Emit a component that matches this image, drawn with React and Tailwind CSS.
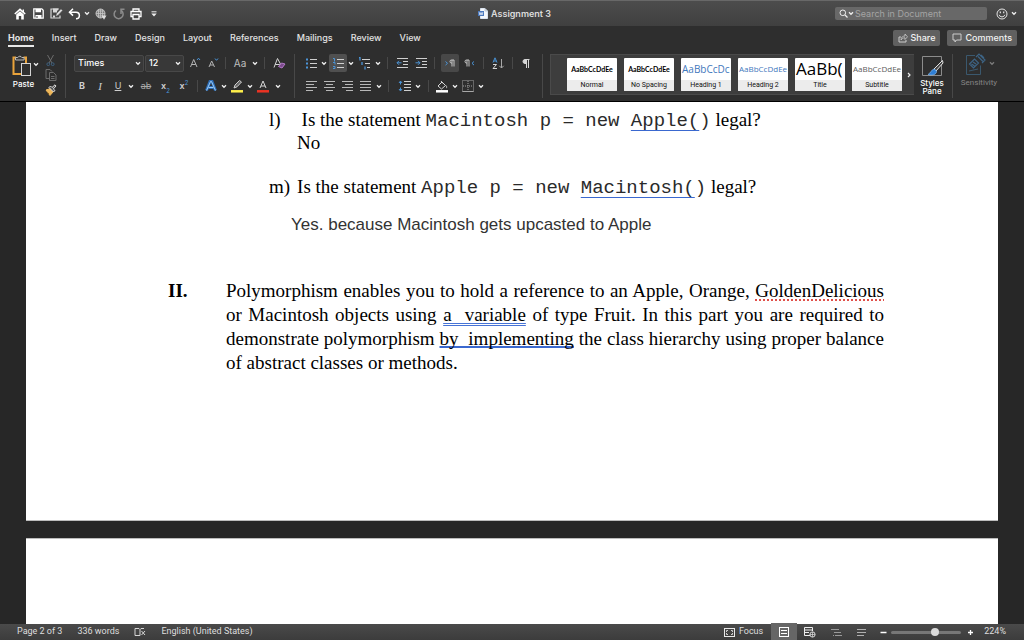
import React from 'react';

const UI = "font-['Inter','Noto_Sans',sans-serif]";

function Icon({ w = 14, h = 14, children, className = '' }) {
  return (
    <svg width={w} height={h} viewBox={`0 0 ${w} ${h}`} fill="none" stroke="#d6d6d6" aria-hidden="true" className={`shrink-0 ${className}`}>
      {children}
    </svg>
  );
}

function Chevron({ className = '' }) {
  return (
    <Icon w={6} h={5} className={className}>
      <path d="M1 1.3l2 2 2-2" stroke="#f0f0f0" strokeWidth="1.3" />
    </Icon>
  );
}

function Tool({ label, className = 'w-[18px]', children }) {
  return (
    <button type="button" aria-label={label} className={`flex h-[18px] shrink-0 items-center justify-center ${className}`}>
      {children}
    </button>
  );
}

function More({ label, className = 'w-[8px]' }) {
  return (
    <Tool label={`${label} options`} className={className}>
      <Chevron />
    </Tool>
  );
}

function Divider({ className = 'mx-1' }) {
  return <span className={`h-3 w-px shrink-0 bg-[#484848] ${className}`} />;
}

function TallDivider() {
  return <span className="mt-1 h-11 w-px shrink-0 bg-[#484848]" />;
}

/* Rows of text drawn as short rules: each entry is [x1, x2, y]. */
function Rules({ rows, color = '#cfcfcf' }) {
  return rows.map(([a, b, y], i) => <path key={i} d={`M${a} ${y}.5H${b}`} stroke={color} />);
}

const alignments = [
  ['Align left', [[1, 12, 1], [1, 9, 4], [1, 12, 7], [1, 8, 10]]],
  ['Center', [[1, 12, 1], [3, 10, 4], [1, 12, 7], [3, 10, 10]]],
  ['Align right', [[1, 12, 1], [4, 12, 4], [1, 12, 7], [5, 12, 10]]],
  ['Justify', [[1, 12, 1], [1, 12, 4], [1, 12, 7], [1, 12, 10]]],
];

function TitleBar() {
  return (
    <header className="flex h-[26px] items-center border-t border-[#686868] bg-linear-to-b from-[#4c4c4c] to-[#404040] pr-[6px] pl-[11px]">
      <div className="flex flex-1 items-center">
        <Tool label="Home">
          <Icon w={12} h={12}>
            <path d="M.8 6L6 1.3 11.2 6" stroke="#fff" strokeWidth="1.6" />
            <path d="M2.2 6.6L6 3.2l3.800 3.400V11.500H7.200V8H4.800v3.500H2.200z" fill="#fff" stroke="none" />
            <path d="M9.300 1.500v2.500" stroke="#fff" strokeWidth="1.300" />
          </Icon>
        </Tool>
        <Tool label="Save">
          <Icon w={11} h={11}>
            <path d="M.8.8h8L10.200 2.200v8H.8z" stroke="#fff" strokeWidth="1.300" />
            <path d="M2.500 1h5.500v3.200H2.500zM2.500 7h6v3.500h-6z" fill="#fff" stroke="none" />
            <path d="M4 8v2" stroke="#444" />
          </Icon>
        </Tool>
        <Tool label="Save as">
          <Icon w={13} h={11}>
            <path d="M9 1H1v9h9V7.500" stroke="#d8d8d8" strokeWidth="1.200" />
            <path d="M3 1.500h5M3 3.500h4M3 8.500h2" stroke="#d8d8d8" strokeWidth="2" />
            <path d="M5.500 8.500l1-3L11 .8l1.700 1.700L8 7.500z" fill="#d8d8d8" stroke="#444" strokeWidth=".6" />
          </Icon>
        </Tool>
        <Tool label="Undo">
          <Icon w={13} h={12}>
            <path d="M1.500 4.200h6.500c4.500 0 4.500 6.500 0 6.500" stroke="#fff" strokeWidth="1.500" />
            <path d="M5 .8L1.500 4.200 5 7.600" stroke="#fff" strokeWidth="1.500" />
          </Icon>
        </Tool>
        <More label="Undo" />
        <Tool label="Language" className="w-5">
          <Icon w={12} h={12}>
            <circle cx="5.500" cy="5.500" r="4.500" fill="#7a7a7a" stroke="#c4c4c4" />
            <path d="M1 5.500h9M5.500 1v9M2 3h7M2 8h6M3.500 1.500v8M7.500 1.500v8" stroke="#c4c4c4" strokeWidth=".8" />
            <path d="M6.500 7.500h5L9 11.800z" fill="#ddd" stroke="none" />
          </Icon>
        </Tool>
        <Tool label="Redo" className="w-4">
          <Icon w={12} h={12}>
            <path d="M3 2.500a4.500 4.500 0 1 0 5.500.2M8 6V1.200h3.500" stroke="#8b8b8b" strokeWidth="1.500" />
          </Icon>
        </Tool>
        <Tool label="Print" className="w-[18px]">
          <Icon w={12} h={12}>
            <path d="M3 3.500V1h6v2.500M2.500 8.500H1v-5h10v5H9.500M3 6.500h6V11H3z" stroke="#fff" strokeWidth="1.300" />
          </Icon>
        </Tool>
        <Tool label="Customize toolbar" className="w-[18px]">
          <Icon w={6} h={6}>
            <path d="M.5.8h5" stroke="#eee" />
            <path d="M.3 2.500h5.400L3 5.500z" fill="#eee" stroke="none" />
          </Icon>
        </Tool>
      </div>
      <h1 className="flex items-center gap-[3px] text-[9px] font-semibold text-[#dcdcdc]">
        <Icon w={10} h={11}>
          <path d="M2.500.5H7l2.500 2.500v7.500h-7z" fill="#f4f7fb" stroke="#dbe3ee" />
          <path d="M7 .5V3h2.500" stroke="#9ab" strokeWidth=".6" />
          <rect x="0" y="3" width="6" height="5" fill="#4a78bd" stroke="none" />
          <path d="M1.200 4.200l.8 2.800 1-2.500 1 2.500.8-2.800" stroke="#fff" strokeWidth=".7" />
        </Icon>
        Assignment 3
      </h1>
      <div className="flex flex-1 items-center justify-end">
        <label className="flex h-[13px] w-[152px] items-center rounded-[2px] bg-[#686868] pl-1">
          <Icon w={9} h={9}>
            <circle cx="3.800" cy="3.800" r="2.800" stroke="#eee" />
            <path d="M6 6l2.500 2.500" stroke="#eee" strokeWidth="1.200" />
          </Icon>
          <Chevron className="mr-px" />
          <input type="search" aria-label="Search in Document" placeholder="Search in Document" className="h-3 min-w-0 flex-1 bg-transparent text-[9px] leading-3 text-white outline-none placeholder:text-[#a4a4a4]" />
        </label>
        <Tool label="Feedback" className="ml-[7px] w-4">
          <Icon w={12} h={12}>
            <circle cx="6" cy="6" r="5" stroke="#e6e6e6" />
            <path d="M3.200 6.800a2.900 2.900 0 0 0 5.600 0" stroke="#e6e6e6" />
            <path d="M4.300 3.500v1.700M7.700 3.500v1.700" stroke="#e6e6e6" strokeWidth="1.200" />
          </Icon>
        </Tool>
        <More label="Feedback" />
      </div>
    </header>
  );
}

const tabs = ['Home', 'Insert', 'Draw', 'Design', 'Layout', 'References', 'Mailings', 'Review', 'View'];

function Tabs() {
  return (
    <div className="flex h-6 items-center justify-between bg-[#2e2e2e] pr-[7px] pl-2">
      <nav className="flex gap-[18px]">
        {tabs.map((t) => (
          <a key={t} href={`#${t.toLowerCase()}`} className={`border-b-2 pt-[2px] text-[9px] leading-[14px] text-[#e2e2e2] ${t === 'Home' ? 'border-[#e8e8e8] font-bold' : 'border-transparent font-medium'}`}>
            {t}
          </a>
        ))}
      </nav>
      <div className="flex gap-[7px] text-[9px] font-medium text-[#f2f2f2]">
        <button type="button" className="flex h-4 items-center gap-[3px] rounded-[2px] bg-[#606060] px-[5px]">
          <Icon w={10} h={10}>
            <path d="M3 4H1v5h7V7" stroke="#ccc" />
            <path d="M3 7c0-3 2-4 4-4V1l2.500 2.800L7 6.500V4.800C5 4.800 4 5.500 3 7z" stroke="#ccc" strokeWidth=".8" />
          </Icon>
          Share
        </button>
        <button type="button" className="flex h-4 items-center gap-[3px] rounded-[2px] bg-[#606060] px-[5px]">
          <Icon w={10} h={10}>
            <path d="M1 1h8v6H4.500L3 9V7H1z" stroke="#ccc" />
          </Icon>
          Comments
        </button>
      </div>
    </div>
  );
}

function ClipboardGroup() {
  return (
    <div className="flex w-[65px] shrink-0">
      <button type="button" className="flex w-8 flex-col items-center gap-[2px] pt-[5px] pl-[15px] text-[8px] leading-[10px] font-medium text-white">
        <Icon w={20} h={22} className="mr-1">
          <path d="M4 2.500H1.500v16.500H9" stroke="#e9a33b" strokeWidth="2" />
          <path d="M11.500 2.500h2.500v6" stroke="#e9a33b" strokeWidth="2" />
          <path d="M3.500 5V2.500h2.300a2.200 2.200 0 0 1 4 0h2.300V5z" stroke="#b9b9b9" fill="#3a3a3a" />
          <rect x="9.500" y="8.500" width="9" height="12" fill="#303030" stroke="#d5d5d5" />
        </Icon>
        Paste
      </button>
      <div className="flex w-2 items-start pt-[5px]">
        <More label="Paste" />
      </div>
      <div className="flex flex-col items-center pt-px">
        <Tool label="Cut" className="-mb-[3px] w-[21px]">
          <Icon w={9} h={13}>
            <path d="M1.500 1l4.500 8M7.500 1L3 9" stroke="#6c6c6c" />
            <circle cx="2.300" cy="10.200" r="1.400" stroke="#3e6180" />
            <circle cx="6.700" cy="10.200" r="1.400" stroke="#3e6180" />
          </Icon>
        </Tool>
        <Tool label="Copy" className="-mb-[3px] w-[21px]">
          <Icon w={12} h={12}>
            <path d="M4 9.500H1v-9h4l2 2" stroke="#6c6c6c" />
            <path d="M4.500 3.500h4l2.500 2.500v5.500H4.500zM6 7.500h3.500M6 9.500h3.500" stroke="#6c6c6c" />
          </Icon>
        </Tool>
        <Tool label="Format painter" className="w-[21px]">
          <Icon w={12} h={12}>
            <path d="M1 6l4.500-1.500L8 8l-3 3.500z" fill="#eeb75b" stroke="#eeb75b" />
            <path d="M2 8.500l2 1.500" stroke="#7a5518" />
            <path d="M4 3.500l4.500 4.500L10 6.500 8.300 5l2.700-3-1-1.200L7 3.500 5.500 2z" fill="#555" stroke="#eee" strokeWidth=".9" />
          </Icon>
        </Tool>
      </div>
    </div>
  );
}

function PickList({ label, value, className }) {
  return (
    <div className={`relative shrink-0 ${className}`}>
      <select aria-label={label} defaultValue={value} className="block h-[17px] w-full appearance-none rounded-[2px] border border-[#484848] bg-[#383838] pl-[3px] text-[9px] leading-[14px] font-medium text-white">
        <option>{value}</option>
      </select>
      <Chevron className="pointer-events-none absolute top-[6px] right-[3px]" />
    </div>
  );
}

function FontGroup() {
  return (
    <div className="flex w-[228px] shrink-0 flex-col gap-[5px] pt-1 pl-[7px]">
      <div className="flex h-[18px] items-center">
        <PickList label="Font" value="Times" className="ml-px w-[70px]" />
        <PickList label="Font size" value="12" className="ml-px w-[39px]" />
        <Tool label="Grow font" className="ml-[2px] w-[18px]">
          <Icon w={12} h={12}>
            <path d="M1.500 10L4.700 2.500 8 10M2.800 7.500h4" stroke="#b4b4b4" />
            <path d="M8 3l1.500-1.800L11 3" stroke="#4a94d8" />
          </Icon>
        </Tool>
        <Tool label="Shrink font">
          <Icon w={12} h={12}>
            <path d="M2 10l2.700-6L7.500 10M3 8h3.500" stroke="#b4b4b4" />
            <path d="M8 1.500l1.500 1.800L11 1.500" stroke="#4a94d8" />
          </Icon>
        </Tool>
        <Divider className="mx-[3px]" />
        <Tool label="Change case" className="w-[22px] text-[10px] text-[#bebebe]">Aa</Tool>
        <More label="Change case" />
        <Divider className="mx-[5px]" />
        <Tool label="Clear formatting">
          <Icon w={13} h={13}>
            <path d="M1 10.500L4.500 1.500 8 8M2.300 7.500h4.500" />
            <path d="M5.500 9.500l3-3.500 3.500 1-3 4z" fill="#7b4a8c" stroke="#b479c8" />
          </Icon>
        </Tool>
      </div>
      <div className="flex h-[18px] items-center text-[10px] text-[#cecece]">
        <Tool label="Bold"><b className="text-[9px]">B</b></Tool>
        <Tool label="Italic"><i className="font-['Liberation_Serif',serif] text-[11px]">I</i></Tool>
        <Tool label="Underline"><u className="text-[9px]">U</u></Tool>
        <More label="Underline" />
        <Tool label="Strikethrough" className="ml-px w-5"><s className="text-[9px] text-[#a8a8a8]">ab</s></Tool>
        <Tool label="Subscript" className="w-[19px]"><span className="text-[9px] font-semibold">x</span><span className="pt-2 text-[6px] text-[#4a94d8]">2</span></Tool>
        <Tool label="Superscript" className="w-[18px]"><span className="text-[9px] font-semibold">x</span><span className="pb-2 text-[6px] text-[#4a94d8]">2</span></Tool>
        <Divider />
        <Tool label="Text effects">
          <Icon w={12} h={12}>
            <path d="M1.500 10.500L5 1.500h2l3.500 9M3.500 7.500h5" stroke="#2d6cb5" strokeWidth="3" />
            <path d="M1.500 10.500L5.500 1.500h1l4 9M3.500 7.500h5" stroke="#9ccbf5" />
          </Icon>
        </Tool>
        <More label="Text effects" />
        <Tool label="Highlight">
          <Icon w={12} h={13}>
            <path d="M3 8l1-3 4.500-4.500L10.500 2 6 6.800z" fill="#666" stroke="#cfcfcf" />
            <path d="M0 11.300h12" stroke="#fff04b" strokeWidth="2.500" />
          </Icon>
        </Tool>
        <More label="Highlight" />
        <Tool label="Font color">
          <Icon w={12} h={13}>
            <path d="M3 8L6 1l3 7M4 6h4" />
            <path d="M0 11.300h12" stroke="#ea3323" strokeWidth="2.500" />
          </Icon>
        </Tool>
        <More label="Font color" className="ml-[2px] w-2" />
      </div>
    </div>
  );
}

function ParagraphGroup() {
  return (
    <div className="flex w-[247px] shrink-0 flex-col gap-[5px] pt-1 pl-[7px]">
      <div className="flex h-[18px] items-center">
        <Tool label="Bullets">
          <Icon w={13} h={13}>
            <path d="M1 2.500h2M1 6.500h2M1 10.500h2" stroke="#4a94d8" strokeWidth="2" />
            <Rules rows={[[5, 12, 2], [5, 12, 6], [5, 12, 10]]} />
          </Icon>
        </Tool>
        <More label="Bullets" />
        <Tool label="Numbering" className="ml-px w-[18px] rounded-[2px] bg-[#505050]">
          <Icon w={13} h={13}>
            <path d="M1 1.500h1.500v3M1 5.500h2v2M1 9.500h2v2H1" stroke="#4a94d8" />
            <Rules rows={[[5, 12, 2], [5, 12, 6], [5, 12, 10]]} />
          </Icon>
        </Tool>
        <More label="Numbering" />
        <Tool label="Multilevel list" className="w-[19px]">
          <Icon w={13} h={13}>
            <path d="M1 .5h1v3M4 5v3M7 9.500v3" stroke="#4a94d8" strokeWidth="1.300" />
            <Rules rows={[[4, 12, 2], [7, 12, 6], [9, 12, 10]]} />
          </Icon>
        </Tool>
        <More label="Multilevel list" />
        <Divider className="mr-1 ml-[5px]" />
        <Tool label="Decrease indent" className="w-5">
          <Icon w={12} h={12}>
            <Rules rows={[[1, 12, 1], [7, 12, 4], [7, 12, 7], [1, 12, 10]]} />
            <path d="M5.500 5.800H1M3 3.800l-2 2 2 2" stroke="#4a94d8" />
          </Icon>
        </Tool>
        <Tool label="Increase indent">
          <Icon w={12} h={12}>
            <Rules rows={[[1, 12, 1], [7, 12, 4], [7, 12, 7], [1, 12, 10]]} />
            <path d="M.5 5.800H5M3 3.800l2 2-2 2" stroke="#4a94d8" />
          </Icon>
        </Tool>
        <Divider className="mr-[6px] ml-1" />
        <Tool label="Left to right" className="w-[18px] rounded-[2px] bg-[#484848]">
          <Icon w={12} h={10}>
            <path d="M1.500 3.500l2 1.800-2 1.800" stroke="#4a94d8" />
            <path d="M10 2H7.500a1.300 1.300 0 0 0 0 3H8M8 2v6.500M10 2v6.500" strokeWidth=".9" />
          </Icon>
        </Tool>
        <Tool label="Right to left" className="w-5">
          <Icon w={12} h={10}>
            <path d="M11 3.500L9 5.300l2 1.800" stroke="#4a94d8" />
            <path d="M6 2H3.500a1.300 1.300 0 0 0 0 3H4M4 2v6.500M6 2v6.500" strokeWidth=".9" />
          </Icon>
        </Tool>
        <Divider />
        <Tool label="Sort" className="w-5">
          <Icon w={13} h={13}>
            <path d="M1 5.500L3 .8l2 4.700M1.800 4h2.600" stroke="#4a94d8" />
            <path d="M1 7.500h3.500L1 11.500h4" />
            <path d="M9.500 2v9M7.300 8.800L9.500 11l2.200-2.200" stroke="#a8a8a8" />
          </Icon>
        </Tool>
        <Divider className="mr-[3px] ml-1" />
        <Tool label="Show formatting marks" className="w-5">
          <Icon w={10} h={11}>
            <path d="M8.500 1.500H4a2 2 0 0 0 0 4h1M5.500 1.500V10M7.500 1.500V10" />
            <path d="M4 1.500h1.500v4H4a2 2 0 0 1 0-4z" fill="#d6d6d6" stroke="none" />
          </Icon>
        </Tool>
      </div>
      <div className="flex h-[18px] items-center">
        {alignments.map(([label, rows]) => (
          <Tool key={label} label={label}>
            <Icon w={13} h={12}><Rules rows={rows} color="#b8b8b8" /></Icon>
          </Tool>
        ))}
        <More label="Alignment" className="ml-px w-2" />
        <Divider className="mx-[5px]" />
        <Tool label="Line spacing" className="w-5">
          <Icon w={13} h={12}>
            <path d="M2.500 1.500v3M1 3l1.500-2L4 3M2.500 7.500v3M1 9l1.500 2L4 9" stroke="#4a94d8" />
            <Rules rows={[[6, 13, 1], [6, 13, 4], [6, 13, 7], [6, 13, 10]]} />
          </Icon>
        </Tool>
        <More label="Line spacing" />
        <Divider className="mr-1 ml-[6px]" />
        <Tool label="Shading">
          <Icon w={12} h={13}>
            <path d="M2 6l4-4 3.500 3.500-4 3.500zM5 1l2 2.500M10 5.500c1 1.500 1 2 .2 2.500" />
            <path d="M0 11.300h12" stroke="#fff" strokeWidth="2.500" />
          </Icon>
        </Tool>
        <More label="Shading" />
        <Tool label="Borders">
          <Icon w={12} h={12}>
            <path d="M.5.5h11v11H.5zM6 1v10M1 6h10" stroke="#a0a0a0" strokeDasharray="1 1" />
            <path d="M.5 11.500h11" stroke="#a8a8a8" />
          </Icon>
        </Tool>
        <More label="Borders" />
      </div>
    </div>
  );
}

const styles = [
  ['Normal', 'AaBbCcDdEe', "justify-center font-['Lato',sans-serif] text-[7px] font-bold text-black"],
  ['No Spacing', 'AaBbCcDdEe', "justify-center font-['Lato',sans-serif] text-[7px] font-bold text-black"],
  ['Heading 1', 'AaBbCcDc', "font-['Open_Sans',sans-serif] text-[10px] text-[#3f78bd]"],
  ['Heading 2', 'AaBbCcDdEe', "font-['Open_Sans',sans-serif] text-[8px] text-[#3f78bd]"],
  ['Title', 'AaBb(', "font-['Open_Sans',sans-serif] text-[17px] text-black"],
  ['Subtitle', 'AaBbCcDdEe', "font-['Open_Sans',sans-serif] text-[8px] text-[#5c5c5c]"],
];

function StylesGallery() {
  return (
    <div className="mt-1 ml-[7px] flex h-[41px] flex-1 items-center justify-between border border-r-0 border-[#4a4a4a] bg-[#3d3d3d] pl-4">
      <div className="flex gap-[7px]">
        {styles.map(([name, sample, look]) => (
          <button key={name} type="button" className="flex h-[33px] w-[50px] flex-col overflow-hidden rounded-[1px] bg-white">
            <span className={`flex h-[22px] w-full items-center px-px whitespace-nowrap ${look}`}>{sample}</span>
            <span className="h-[11px] w-full bg-[#ececec] text-center font-['Roboto',sans-serif] text-[7px] leading-[11px] text-[#111]">{name}</span>
          </button>
        ))}
      </div>
      <Tool label="More styles" className="w-[11px]">
        <Icon w={4} h={6}>
          <path d="M1 1l2 2-2 2" stroke="#eee" strokeWidth="1.200" />
        </Icon>
      </Tool>
    </div>
  );
}

function Ribbon() {
  return (
    <div className="flex h-[52px] border-b border-black bg-[#2e2e2e]">
      <ClipboardGroup />
      <TallDivider />
      <FontGroup />
      <TallDivider />
      <ParagraphGroup />
      <TallDivider />
      <StylesGallery />
      <button type="button" className="flex w-9 shrink-0 flex-col items-center gap-[2px] pt-1 text-[8px] leading-[8px] font-medium text-white">
        <Icon w={24} h={23}>
          <path d="M2.500 2.500h19v19h-19z" stroke="#8c8c8c" />
          <path d="M22.500 6.500L14 15l2 2 7-8z" fill="#444" stroke="#e4e4e4" />
          <path d="M14.500 15c-3 0-3.500 4-6.500 5.500 4 1.500 9 0 8.500-3.500z" fill="#2f7fd6" stroke="#8ec3f5" strokeWidth=".6" />
        </Icon>
        <span className="text-center">Styles<br />Pane</span>
      </button>
      <div className="ml-[2px] flex shrink-0"><TallDivider /></div>
      <button type="button" className="flex w-[52px] shrink-0 flex-col items-center gap-[2px] pt-[2px] font-['Roboto',sans-serif] text-[8px] leading-[12px] text-[#858585]">
        <span className="flex items-center gap-px">
          <Icon w={24} h={23}>
            <path d="M11 3.500H2.500v19h14v-9" stroke="#3a586e" />
            <path d="M5.500 12l5-5 4 4-5 5zM7.500 12l3 2M9 10l3 2M12 5l3-3 6 6-3 3M14 4.500l5 5M17 3l3 3" stroke="#3d6485" strokeWidth="1.200" />
            <path d="M5 19l9-2" stroke="#3a586e" />
          </Icon>
          <Chevron className="opacity-40" />
        </span>
        Sensitivity
      </button>
      <span className="w-[19px] shrink-0" />
    </div>
  );
}

const code = "font-['Liberation_Mono',monospace] text-[#2a2a2a]";
const grammar = 'underline decoration-[#3a68cf] decoration-1 underline-offset-4 [text-decoration-skip-ink:none]';
const line = 'block [text-align-last:justify]';

function Document() {
  return (
    <main className="flex min-h-0 flex-1 flex-col gap-[17px] overflow-hidden bg-[#272727] px-[26px] font-['Liberation_Serif',serif] text-[19px] text-black">
      <article className="shrink-0 border-b border-[#bdbdbd] bg-white pt-[7px] pr-[114px] pb-[145px] pl-[142px]">
        <ol className="pl-[101px] leading-[22px]">
          <li>
            <p><span className="mr-[21px]">l)</span>Is the statement <span className={code}>Macintosh p = new <span className={grammar}>Apple(</span>)</span> legal?</p>
            <p className="pl-[28px]">No</p>
          </li>
          <li className="mt-[22px]">
            <p><span className="mr-[7px]">m)</span>Is the statement <span className={code}>Apple p = new <span className={grammar}>Macintosh(</span>)</span> legal?</p>
            <p className="mt-[15px] pl-[22px] font-['Liberation_Sans',sans-serif] text-[17px] text-[#333]">Yes. because Macintosh gets upcasted to Apple</p>
          </li>
        </ol>
        <section className="mt-[43px] flex leading-6">
          <h2 className="w-[58px] shrink-0 font-bold">II.</h2>
          <p className="flex-1">
            <span className={line}>Polymorphism enables you to hold a reference to an Apple, Orange, <span className="underline decoration-[#e0504a] decoration-dotted decoration-2 underline-offset-2 [text-decoration-skip-ink:none]">GoldenDelicious</span></span>{' '}
            <span className={line}>or Macintosh objects using <span className="underline decoration-[#4673d6] decoration-double decoration-1 underline-offset-2 [text-decoration-skip-ink:none]">a&nbsp; variable</span> of type Fruit. In this part you are required to</span>{' '}
            <span className={line}>demonstrate polymorphism <span className="underline decoration-[#3a68cf] decoration-2 underline-offset-1 [text-decoration-skip-ink:none]">by&nbsp; implementing</span> the class hierarchy using proper balance</span>{' '}
            <span className="block">of abstract classes or methods.</span>
          </p>
        </section>
      </article>
      <article aria-label="Page 3" className="flex-1 border-t border-[#bdbdbd] bg-white" />
    </main>
  );
}

function StatusBar() {
  return (
    <footer className="flex h-4 items-center justify-between bg-linear-to-b from-[#4a4a4a] to-[#3c3c3c] pr-[18px] pl-[17px] font-['Roboto',sans-serif] text-[9px] text-[#dedede]">
      <div className="flex items-center gap-[15px]">
        <span>Page 2 of 3</span>
        <span>336 words</span>
        <Tool label="Proofing" className="w-3">
          <Icon w={12} h={10}>
            <path d="M6 8.500H1v-7h4l1 1 1-1h3M6 2.500v6" />
            <path d="M7.500 4l3.500 4M11 4L7.500 8" />
          </Icon>
        </Tool>
        <span>English (United States)</span>
      </div>
      <div className="flex h-4 items-center">
        <button type="button" className="mr-2 flex items-center gap-1">
          <Icon w={11} h={9}>
            <rect x=".5" y=".5" width="10" height="8" stroke="#e8e8e8" />
            <path d="M2.500 4V2.500H4M7 2.500h1.500V4M8.500 5v1.500H7M4 6.500H2.500V5" stroke="#cfcfcf" />
          </Icon>
          Focus
        </button>
        <Tool label="Print layout" className="-my-px w-[26px] bg-[#666]">
          <Icon w={10} h={10}>
            <rect x=".5" y=".5" width="9" height="9" stroke="#fff" />
            <path d="M2 3.500h6M2 6.500h6" stroke="#fff" />
          </Icon>
        </Tool>
        <Tool label="Web layout" className="w-[26px]">
          <Icon w={12} h={11}>
            <path d="M6 8.500H.5V.5h8V4M1 3h7M1 5.500h4" stroke="#eee" />
            <circle cx="8.500" cy="7.500" r="2.600" stroke="#ddd" />
            <path d="M6 7.500h5M8.500 5v5" stroke="#ddd" strokeWidth=".7" />
          </Icon>
        </Tool>
        <Tool label="Outline" className="w-[26px]">
          <Icon w={11} h={9}><Rules rows={[[0, 8, 1], [3, 10, 4], [2, 3, 7], [4, 11, 7]]} color="#9a9a9a" /></Icon>
        </Tool>
        <Tool label="Draft" className="w-[26px]">
          <Icon w={10} h={9}><Rules rows={[[0, 9, 1], [0, 9, 4], [0, 7, 7]]} color="#b0b0b0" /></Icon>
        </Tool>
        <Tool label="Zoom out" className="w-4">
          <Icon w={7} h={7}><path d="M.5 3.500h6" stroke="#fff" strokeWidth="1.500" /></Icon>
        </Tool>
        <input type="range" aria-label="Zoom" min="0" max="100" defaultValue="64" className="h-[3px] w-[70px] appearance-none rounded-full bg-[#777] [&::-webkit-slider-thumb]:size-2 [&::-webkit-slider-thumb]:appearance-none [&::-webkit-slider-thumb]:rounded-full [&::-webkit-slider-thumb]:bg-[#dadada]" />
        <Tool label="Zoom in" className="w-[18px]">
          <Icon w={7} h={7}><path d="M1 3.500h5M3.500 1v5" stroke="#fff" strokeWidth="1.300" /></Icon>
        </Tool>
        <span className="ml-[5px]">224%</span>
      </div>
    </footer>
  );
}

export default function App() {
  return (
    <div className={`flex h-screen flex-col overflow-hidden ${UI}`}>
      <TitleBar />
      <Tabs />
      <Ribbon />
      <Document />
      <StatusBar />
    </div>
  );
}
